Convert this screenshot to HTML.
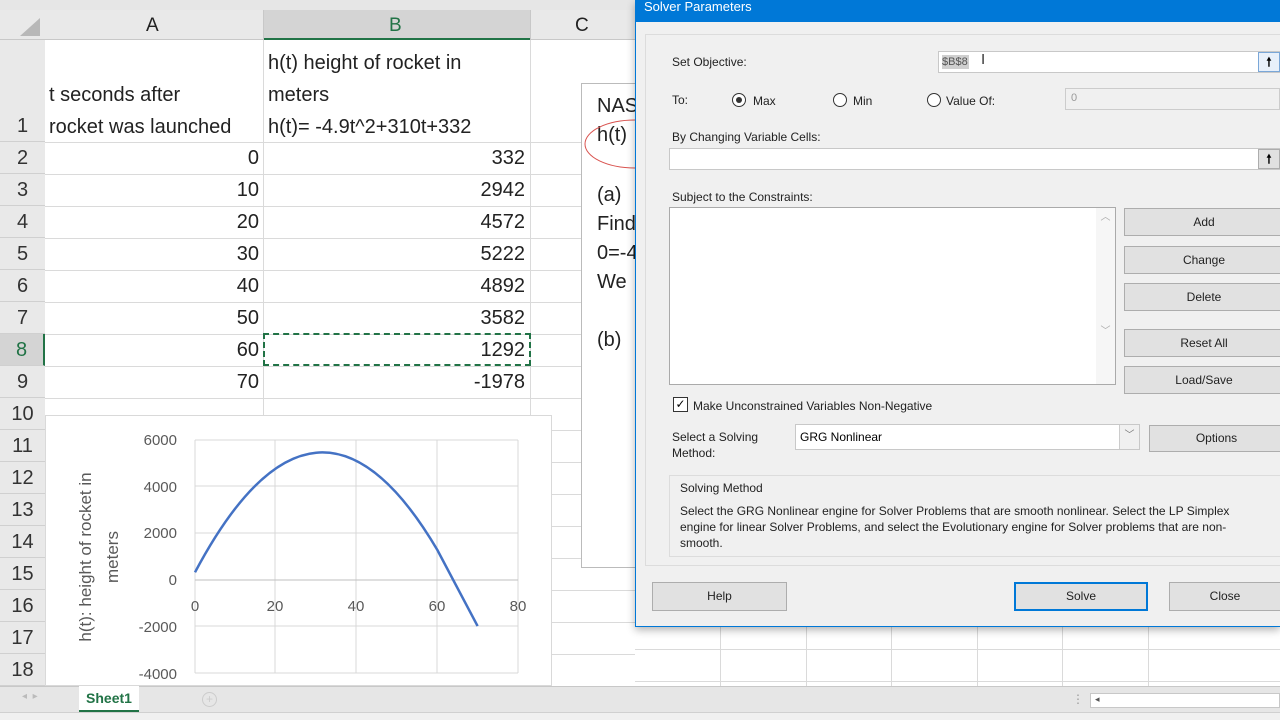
<!DOCTYPE html>
<html><head><meta charset="utf-8"><style>
*{margin:0;padding:0;box-sizing:border-box}
body{width:1280px;height:720px;overflow:hidden;background:#fff;font-family:"Liberation Sans",sans-serif;position:relative}
.a{position:absolute}
.cell{position:absolute;font-size:20px;color:#222;white-space:nowrap}
.rh{position:absolute;left:0;width:45px;text-align:center;font-size:20px;color:#333;background:#e9e9e9;border-bottom:1px solid #d0d0d0}
.hl{position:absolute;left:45px;width:590px;height:1px;background:#dadada}
.d{font-size:12px;color:#222}
.btn{position:absolute;background:#e1e1e1;border:1px solid #adadad;font-size:12px;text-align:center;color:#222}
</style></head><body>
<div class="a" style="left:0;top:0;width:1280px;height:10px;background:#e6e6e6"></div>
<div class="a" style="left:0;top:10px;width:640px;height:30px;background:#e9e9e9;border-bottom:1px solid #c8c8c8"></div>
<div class="a" style="left:263px;top:10px;width:267px;height:30px;background:#d4d4d4;border-bottom:2px solid #217346"></div>
<div class="a" style="left:20px;top:18px;width:0;height:0;border-left:20px solid transparent;border-bottom:18px solid #b8b8b8"></div>
<div class="cell" style="left:146px;top:15px;font-size:19px">A</div>
<div class="cell" style="left:389px;top:15px;font-size:19px;color:#217346">B</div>
<div class="cell" style="left:575px;top:15px;font-size:19px">C</div>
<div class="a" style="left:263px;top:10px;width:1px;height:30px;background:#c8c8c8"></div>
<div class="a" style="left:530px;top:10px;width:1px;height:30px;background:#c8c8c8"></div>
<div class="a" style="left:0;top:40px;width:45px;height:646px;background:#e9e9e9;border-right:1px solid #c8c8c8"></div>
<div class="rh" style="top:40px;height:102px;line-height:172px">1</div>
<div class="rh" style="top:142px;height:32px;line-height:32px">2</div>
<div class="rh" style="top:174px;height:32px;line-height:32px">3</div>
<div class="rh" style="top:206px;height:32px;line-height:32px">4</div>
<div class="rh" style="top:238px;height:32px;line-height:32px">5</div>
<div class="rh" style="top:270px;height:32px;line-height:32px">6</div>
<div class="rh" style="top:302px;height:32px;line-height:32px">7</div>
<div class="rh" style="top:334px;height:32px;line-height:32px;background:#d4d4d4;color:#217346;border-right:2px solid #217346">8</div>
<div class="rh" style="top:366px;height:32px;line-height:32px">9</div>
<div class="rh" style="top:398px;height:32px;line-height:32px">10</div>
<div class="rh" style="top:430px;height:32px;line-height:32px">11</div>
<div class="rh" style="top:462px;height:32px;line-height:32px">12</div>
<div class="rh" style="top:494px;height:32px;line-height:32px">13</div>
<div class="rh" style="top:526px;height:32px;line-height:32px">14</div>
<div class="rh" style="top:558px;height:32px;line-height:32px">15</div>
<div class="rh" style="top:590px;height:32px;line-height:32px">16</div>
<div class="rh" style="top:622px;height:32px;line-height:32px">17</div>
<div class="rh" style="top:654px;height:32px;line-height:32px">18</div>
<div class="hl" style="top:142px"></div><div class="hl" style="top:174px"></div><div class="hl" style="top:206px"></div><div class="hl" style="top:238px"></div><div class="hl" style="top:270px"></div><div class="hl" style="top:302px"></div><div class="hl" style="top:334px"></div><div class="hl" style="top:366px"></div><div class="hl" style="top:398px"></div><div class="hl" style="top:430px"></div><div class="hl" style="top:462px"></div><div class="hl" style="top:494px"></div><div class="hl" style="top:526px"></div><div class="hl" style="top:558px"></div><div class="hl" style="top:590px"></div><div class="hl" style="top:622px"></div><div class="hl" style="top:654px"></div>
<div class="a" style="left:263px;top:40px;width:1px;height:646px;background:#dadada"></div>
<div class="a" style="left:530px;top:40px;width:1px;height:646px;background:#dadada"></div>
<div class="cell" style="left:49px;top:79px;line-height:32px">t seconds after<br>rocket was launched</div>
<div class="cell" style="left:268px;top:47px;line-height:32px">h(t) height of rocket in<br>meters<br>h(t)= -4.9t^2+310t+332</div>
<div class="cell" style="left:45px;width:214px;top:142px;text-align:right;line-height:32px">0<br>10<br>20<br>30<br>40<br>50<br>60<br>70</div>
<div class="cell" style="left:263px;width:262px;top:142px;text-align:right;line-height:32px">332<br>2942<br>4572<br>5222<br>4892<br>3582<br>1292<br>-1978</div>
<div class="a" style="left:263px;top:333px;width:268px;height:33px;border:2px dashed #217346"></div>
<div class="a" style="left:581px;top:83px;width:60px;height:485px;background:#fff;border:1px solid #bbb"></div>
<div class="cell" style="left:597px;top:92px;line-height:29px">NAS<br>h(t)</div>
<div class="cell" style="left:597px;top:181px;line-height:29px">(a)<br>Find<br>0=-4<br>We<br><br>(b)</div>
<svg class="a" style="left:540px;top:115px" width="100" height="60"><ellipse cx="95" cy="29" rx="50" ry="24" fill="none" stroke="#d9534f" stroke-width="1"/></svg>
<div class="a" style="left:45px;top:415px;width:507px;height:271px;background:#fff;border:1px solid #d9d9d9"></div>
<svg class="a" style="left:0;top:0" width="640" height="690">
<g stroke="#d9d9d9" stroke-width="1">
<line x1="195" y1="440" x2="518" y2="440"/><line x1="195" y1="486" x2="518" y2="486"/><line x1="195" y1="533" x2="518" y2="533"/><line x1="195" y1="626" x2="518" y2="626"/><line x1="195" y1="673" x2="518" y2="673"/>
<line x1="195" y1="440" x2="195" y2="673"/><line x1="275" y1="440" x2="275" y2="673"/><line x1="356" y1="440" x2="356" y2="673"/><line x1="437" y1="440" x2="437" y2="673"/><line x1="518" y1="440" x2="518" y2="673"/>
</g>
<line x1="195" y1="580" x2="518" y2="580" stroke="#bfbfbf"/>
<path fill="none" stroke="#4472c4" stroke-width="2.5" d="M195,572.3 Q316.1,344.3 437.3,549.9 L477.6,626.1"/>
<g font-family="Liberation Sans" font-size="15" fill="#595959" text-anchor="end">
<text x="177" y="445">6000</text><text x="177" y="492">4000</text><text x="177" y="538">2000</text><text x="177" y="585">0</text><text x="177" y="632">-2000</text><text x="177" y="679">-4000</text>
</g>
<g font-family="Liberation Sans" font-size="15" fill="#595959" text-anchor="middle">
<text x="195" y="611">0</text><text x="275" y="611">20</text><text x="356" y="611">40</text><text x="437" y="611">60</text><text x="518" y="611">80</text>
</g>
<g font-family="Liberation Sans" font-size="17" fill="#595959" text-anchor="middle">
<text transform="translate(91,557) rotate(-90)">h(t):  height of rocket in</text>
<text transform="translate(118,557) rotate(-90)">meters</text>
</g>
</svg>
<div class="a" style="left:0;top:686px;width:1280px;height:26px;background:#e6e6e6;border-top:1px solid #c8c8c8"></div>
<div class="a" style="left:0;top:712px;width:1280px;height:8px;background:#f0f0f0;border-top:1px solid #d0d0d0"></div>
<div class="a" style="left:79px;top:686px;width:60px;height:26px;background:#fff;border-bottom:2px solid #217346;font-size:14px;font-weight:bold;color:#217346;text-align:center;line-height:24px">Sheet1</div>
<div class="a" style="left:22px;top:691px;font-size:10px;color:#bbb">◂ &nbsp;▸</div>
<div class="a" style="left:202px;top:692px;width:15px;height:15px;border:1px solid #ccc;border-radius:50%;font-size:12px;color:#ccc;text-align:center;line-height:13px">+</div>
<div class="a" style="left:1072px;top:692px;font-size:12px;color:#999">⋮</div>
<div class="a" style="left:1090px;top:693px;width:190px;height:15px;background:#fff;border:1px solid #c8c8c8"></div>
<div class="a" style="left:1095px;top:694px;font-size:9px;color:#555">◂</div>
<div class="a" style="left:635px;top:627px;width:645px;height:59px;background:#fff"></div>
<div class="a" style="left:635px;top:649px;width:645px;height:1px;background:#dadada"></div>
<div class="a" style="left:635px;top:681px;width:645px;height:1px;background:#dadada"></div>
<div class="a" style="left:720px;top:627px;width:1px;height:59px;background:#dadada"></div>
<div class="a" style="left:806px;top:627px;width:1px;height:59px;background:#dadada"></div>
<div class="a" style="left:891px;top:627px;width:1px;height:59px;background:#dadada"></div>
<div class="a" style="left:977px;top:627px;width:1px;height:59px;background:#dadada"></div>
<div class="a" style="left:1062px;top:627px;width:1px;height:59px;background:#dadada"></div>
<div class="a" style="left:1148px;top:627px;width:1px;height:59px;background:#dadada"></div>
<div class="a" style="left:635px;top:0;width:645px;height:627px;background:#f0f0f0;border-left:1px solid #0078d7;border-bottom:1px solid #0078d7;box-shadow:0 3px 8px rgba(0,0,0,.3)"></div>
<div class="a" style="left:635px;top:0;width:645px;height:22px;background:#0078d7"></div>
<div class="a" style="left:644px;top:-1px;font-size:13px;color:#fff">Solver Parameters</div>
<div class="a" style="left:645px;top:34px;width:640px;height:532px;border:1px solid #dcdcdc"></div>
<div class="a d" style="left:672px;top:55px">Set Objective:</div>
<div class="a" style="left:938px;top:51px;width:342px;height:22px;background:#fff;border:1px solid #c8c8c8"></div>
<div class="a" style="left:942px;top:55px;width:27px;height:14px;background:#cfcfcf;font-size:11px;color:#555;line-height:14px">$B$8</div>
<div class="a" style="left:981px;top:51px;font-size:15px;color:#333">I</div>
<div class="a" style="left:1258px;top:52px;width:22px;height:20px;background:#e8f0fa;border:1px solid #7aa7d8;font-size:12px;text-align:center;line-height:18px;font-weight:bold">🠕</div>
<div class="a d" style="left:672px;top:93px">To:</div>
<div class="a" style="left:732px;top:93px;width:14px;height:14px;border:1px solid #333;border-radius:50%;background:#fff"><div class="a" style="left:3px;top:3px;width:6px;height:6px;border-radius:50%;background:#333"></div></div>
<div class="a d" style="left:753px;top:94px">Max</div>
<div class="a" style="left:833px;top:93px;width:14px;height:14px;border:1px solid #333;border-radius:50%;background:#fff"></div>
<div class="a d" style="left:853px;top:94px">Min</div>
<div class="a" style="left:927px;top:93px;width:14px;height:14px;border:1px solid #333;border-radius:50%;background:#fff"></div>
<div class="a d" style="left:946px;top:94px">Value Of:</div>
<div class="a" style="left:1065px;top:88px;width:215px;height:22px;background:#f0f0f0;border:1px solid #ccc;font-size:11px;color:#999;padding:3px 5px">0</div>
<div class="a d" style="left:672px;top:130px">By Changing Variable Cells:</div>
<div class="a" style="left:669px;top:148px;width:611px;height:22px;background:#fff;border:1px solid #c8c8c8"></div>
<div class="a" style="left:1258px;top:149px;width:22px;height:20px;background:#e1e1e1;border:1px solid #adadad;font-size:12px;text-align:center;line-height:18px;font-weight:bold">🠕</div>
<div class="a d" style="left:672px;top:190px">Subject to the Constraints:</div>
<div class="a" style="left:669px;top:207px;width:447px;height:178px;background:#fff;border:1px solid #aaa"></div>
<div class="a" style="left:1096px;top:208px;width:19px;height:176px;background:#f6f6f6;font-size:10px;color:#aaa;text-align:center">︿<br><br><br><br><br><br><br><br><br><br>﹀</div>
<div class="btn" style="left:1124px;top:208px;width:160px;height:28px;line-height:26px">Add</div>
<div class="btn" style="left:1124px;top:246px;width:160px;height:28px;line-height:26px">Change</div>
<div class="btn" style="left:1124px;top:283px;width:160px;height:28px;line-height:26px">Delete</div>
<div class="btn" style="left:1124px;top:329px;width:160px;height:28px;line-height:26px">Reset All</div>
<div class="btn" style="left:1124px;top:366px;width:160px;height:28px;line-height:26px">Load/Save</div>
<div class="a" style="left:673px;top:397px;width:15px;height:15px;border:1px solid #333;background:#fff;font-size:12px;line-height:13px;text-align:center">✓</div>
<div class="a d" style="left:693px;top:399px">Make Unconstrained Variables Non-Negative</div>
<div class="a d" style="left:672px;top:429px;line-height:16px">Select a Solving<br>Method:</div>
<div class="a" style="left:795px;top:424px;width:345px;height:26px;background:#fff;border:1px solid #c8c8c8;font-size:12px;padding:5px 4px">GRG Nonlinear</div>
<div class="a" style="left:1119px;top:425px;width:20px;height:24px;background:#f0f0f0;border-left:1px solid #ccc;font-size:10px;color:#777;text-align:center;line-height:22px">﹀</div>
<div class="btn" style="left:1149px;top:425px;width:135px;height:27px;line-height:25px">Options</div>
<div class="a" style="left:669px;top:475px;width:615px;height:82px;border:1px solid #dcdcdc"></div>
<div class="a d" style="left:680px;top:481px">Solving Method</div>
<div class="a d" style="left:680px;top:503px;line-height:16px;width:565px">Select the GRG Nonlinear engine for Solver Problems that are smooth nonlinear. Select the LP Simplex engine for linear Solver Problems, and select the Evolutionary engine for Solver problems that are non-smooth.</div>
<div class="btn" style="left:652px;top:582px;width:135px;height:29px;line-height:27px">Help</div>
<div class="btn" style="left:1014px;top:582px;width:134px;height:29px;line-height:25px;border:2px solid #0078d7">Solve</div>
<div class="btn" style="left:1169px;top:582px;width:120px;height:29px;line-height:27px;padding-right:8px">Close</div>
</body></html>
